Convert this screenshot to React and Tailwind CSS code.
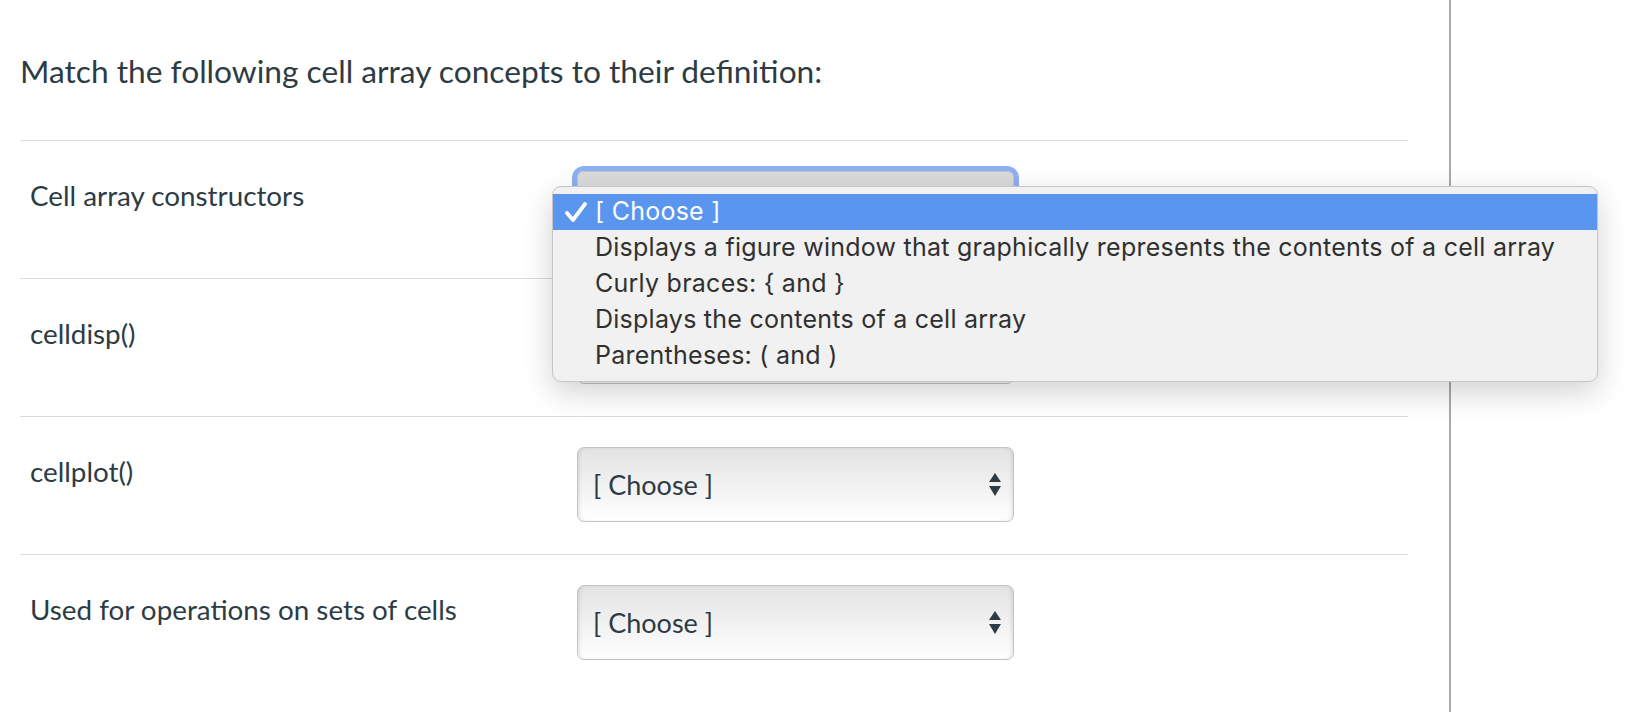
import React from "react";

const options = [
  "[ Choose ]",
  "Displays a figure window that graphically represents the contents of a cell array",
  "Curly braces: { and }",
  "Displays the contents of a cell array",
  "Parentheses: ( and )",
];

const rows = [
  "Cell array constructors",
  "celldisp()",
  "cellplot()",
  "Used for operations on sets of cells",
];

const Arrows = () => (
  <svg width="12" height="23" viewBox="0 0 12 23" className="shrink-0">
    <path d="M6 0 L12 9 L0 9 Z" fill="#2d3b45" />
    <path d="M0 13 L12 13 L6 23 Z" fill="#2d3b45" />
  </svg>
);

const Check = () => (
  <svg width="22" height="20" viewBox="0 0 22 20" className="absolute left-[12px] top-[8px]">
    <path
      d="M2 11 L8 18 L20 2"
      fill="none"
      stroke="white"
      strokeWidth="3.8"
      strokeLinecap="round"
      strokeLinejoin="round"
    />
  </svg>
);

const SelectBox = ({ focused }) => (
  <div
    className={
      "h-[75px] w-[437px] rounded-[7px] border border-[#c4c4c4] flex items-center justify-between pl-[15px] pr-[12px] " +
      (focused
        ? "bg-gradient-to-b from-[#d9d9d9] to-[#e6e6e6] shadow-[0_0_0_5px_#8db0f2]"
        : "bg-gradient-to-b from-[#e3e3e3] via-[#f1f1f1] to-white shadow-[inset_3px_0_4px_-2px_rgba(0,0,0,0.12),inset_-3px_0_4px_-2px_rgba(0,0,0,0.12)]")
    }
  >
    <span className="text-[27px] leading-[32px] text-[#2d3b45]">[ Choose ]</span>
    <Arrows />
  </div>
);

export default function App() {
  return (
    <div
      className="relative w-[1634px] h-[712px] overflow-hidden bg-white"
      style={{ fontFamily: "Lato, 'Open Sans', sans-serif" }}
    >
      <div className="w-[1451px] h-full border-r-2 border-[#a9a9a9] pl-[20px] pr-[41px]">
        <h1 className="pt-[52px] text-[31.7px] leading-[38px] font-normal text-[#2d3b45]">
          Match the following cell array concepts to their definition:
        </h1>
        <div className="mt-[50px]">
          {rows.map((label, i) => (
            <div
              key={label}
              className="flex border-t border-[#dcdcdc] pt-[30px] pb-[32px]"
            >
              <div className="w-[557px] pl-[10px] pt-[8px] text-[27.8px] leading-[34px] text-[#2d3b45]">
                {label}
              </div>
              <SelectBox focused={i === 0} />
            </div>
          ))}
        </div>
      </div>

      {/* open dropdown menu */}
      <div
        className="absolute left-[552px] top-[186px] w-[1046px] rounded-[9px] border border-[#c6c6c6] bg-[#f1f1f1] py-[7px] shadow-[0_10px_30px_rgba(0,0,0,0.18)]"
        style={{ fontFamily: "Inter, 'Liberation Sans', sans-serif" }}
      >
        {options.map((opt, i) => (
          <div
            key={opt}
            className={
              "relative h-[36px] flex items-center pl-[42px] text-[25px] tracking-[0.25px] " +
              (i === 0 ? "bg-[#5a95ef] text-white" : "text-[#303030]")
            }
          >
            {i === 0 && <Check />}
            {opt}
          </div>
        ))}
      </div>
    </div>
  );
}
